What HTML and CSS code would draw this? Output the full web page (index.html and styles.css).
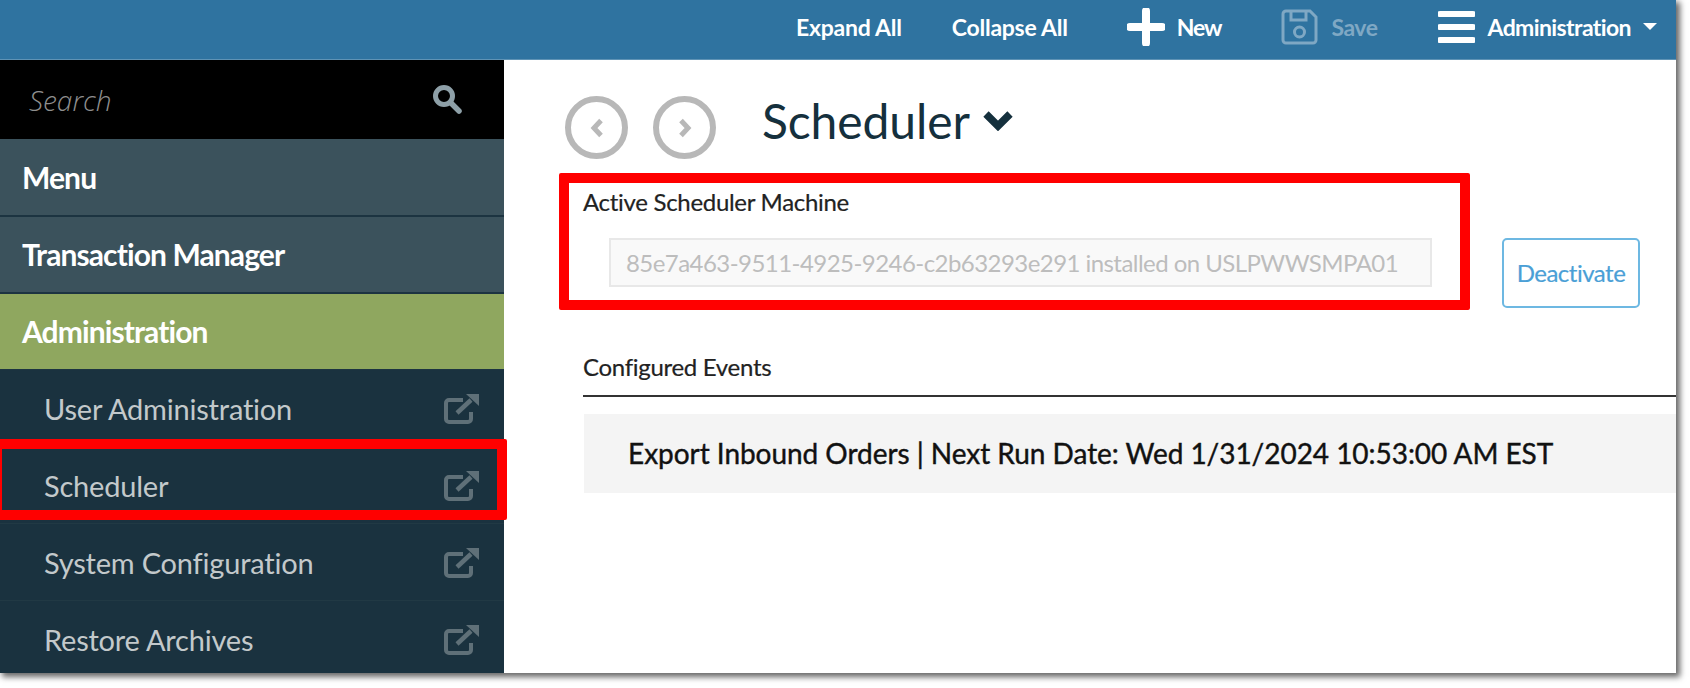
FILE: index.html
```html
<!DOCTYPE html>
<html lang="en">
<head>
<meta charset="utf-8">
<title>Scheduler</title>
<link rel="stylesheet" href="styles.css">
</head>
<body>
<div class="window">
  <header class="topbar">
    <div class="tb-group">
      <span class="tb-text tb-wide">Expand All</span>
      <span class="tb-text tb-wide">Collapse All</span>
    </div>
    <div class="tb-action">
      <svg class="ic-plus" viewBox="0 0 38 38"><path d="M19 3v32M3 19h32" fill="none" stroke="#fff" stroke-width="8" stroke-linecap="round"/></svg>
      <span class="tb-text tb-tight">New</span>
    </div>
    <div class="tb-action tb-disabled">
      <svg class="ic-save" viewBox="0 0 39 38"><path d="M3 6a3 3 0 0 1 3-3h24l6 6v23a3 3 0 0 1-3 3H6a3 3 0 0 1-3-3z" fill="none" stroke="currentColor" stroke-width="3"/><path d="M11 3v9h15V3" fill="none" stroke="currentColor" stroke-width="3"/><circle cx="19.500" cy="24" r="5" fill="none" stroke="currentColor" stroke-width="3"/></svg>
      <span class="tb-text">Save</span>
    </div>
    <div class="tb-action tb-admin">
      <svg class="ic-burger" viewBox="0 0 37 32"><path d="M2 3h33M2 16h33M2 29h33" fill="none" stroke="#fff" stroke-width="6" stroke-linecap="round"/></svg>
      <span class="tb-text tb-admin-text">Administration</span>
      <span class="caret"></span>
    </div>
  </header>
  <div class="body-row">
    <aside class="sidebar">
      <div class="search">
        <span class="search-text">Search</span>
        <svg class="ic-search" viewBox="0 0 30 30"><circle cx="12" cy="12" r="8.500" fill="none" stroke="#8ea0a8" stroke-width="5"/><path d="M18.500 18.500L27 27" stroke="#8ea0a8" stroke-width="5.500" stroke-linecap="round"/></svg>
      </div>
      <div class="menu-head">Menu</div>
      <div class="menu-head">Transaction Manager</div>
      <div class="menu-head menu-active">Administration</div>
      <div class="menu-item"><span>User Administration</span><svg class="ic-ext" viewBox="0 0 35 31"><use href="#ext"/></svg></div>
      <div class="menu-item"><span>Scheduler</span><svg class="ic-ext" viewBox="0 0 35 31"><use href="#ext"/></svg></div>
      <div class="menu-item"><span>System Configuration</span><svg class="ic-ext" viewBox="0 0 35 31"><use href="#ext"/></svg></div>
      <div class="menu-item"><span>Restore Archives</span><svg class="ic-ext" viewBox="0 0 35 31"><use href="#ext"/></svg></div>
    </aside>
    <main class="content">
      <div class="page-head">
        <span class="nav-circle"><svg viewBox="0 0 14 20"><path d="M11 2.500L4 10l7 7.500" fill="none" stroke="#b8b8b8" stroke-width="5"/></svg></span>
        <span class="nav-circle"><svg viewBox="0 0 14 20"><path d="M3 2.500l7 7.500-7 7.500" fill="none" stroke="#b8b8b8" stroke-width="5"/></svg></span>
        <h1 class="page-title">Scheduler</h1>
        <svg class="ic-chevron" viewBox="0 0 32 22"><path d="M4 5l12 12L28 5" fill="none" stroke="#15303d" stroke-width="7.500"/></svg>
      </div>
      <div class="field-label">Active Scheduler Machine</div>
      <div class="field-row">
        <div class="field-input">85e7a463-9511-4925-9246-c2b63293e291 installed on USLPWWSMPA01</div>
        <button class="btn-deactivate">Deactivate</button>
      </div>
      <div class="section-title">Configured Events</div>
      <div class="event-row">Export Inbound Orders | Next Run Date: Wed 1/31/2024 10:53:00 AM EST</div>
    </main>
  </div>
  <div class="annot annot-menu"></div>
  <div class="annot annot-field"></div>
</div>
<svg class="defs" width="0" height="0"><defs><g id="ext" fill="none" stroke="#5f7078" stroke-width="4"><path d="M27 19v7a3 3 0 0 1-3 3H5a3 3 0 0 1-3-3V10a3 3 0 0 1 3-3h14"/><path d="M13 20L27 7" stroke-width="4.500"/><path d="M22 1h13v12z" fill="#5f7078" stroke="none"/></g></defs></svg>
</body>
</html>
```
FILE: styles.css
```css
* { box-sizing: border-box; }
html, body { margin: 0; padding: 0; background: #fff; }
body { font-family: "Lato", "Noto Sans", sans-serif; overflow: hidden; height: 688px; }
.defs { position: absolute; }

.window {
  position: relative;
  width: 1676px;
  height: 673px;
  overflow: visible;
  box-shadow: 3px 3px 6px 1px rgba(0,0,0,.6);
  background: #fff;
  display: flex;
  flex-direction: column;
}

.topbar {
  height: 60px;
  flex: none;
  background: #2f73a0;
  display: flex;
  align-items: center;
  justify-content: flex-end;
  gap: 59px;
  padding: 0 19px 6px 0;
  border-bottom: 1px solid #5f93b5;
}
.tb-group { display: flex; gap: 50px; }
.tb-action { display: flex; align-items: center; gap: 12px; }
.tb-admin { margin-left: 1px; gap: 13px; }
.tb-text { color: #fff; font-size: 23px; font-weight: 700; letter-spacing: -.45px; white-space: nowrap; }
.tb-wide { letter-spacing: -.25px; }
.tb-tight { letter-spacing: -1.1px; }
.tb-admin-text { letter-spacing: -.6px; }
.tb-disabled, .tb-disabled .tb-text { color: #7fa8c4; }
.ic-plus { width: 38px; height: 38px; }
.ic-save { width: 39px; height: 38px; }
.ic-burger { width: 37px; height: 32px; }
.caret { width: 0; height: 0; margin-left: -1px; border: 7px solid transparent; border-top: 7px solid #fff; border-bottom: 0; }

.body-row { flex: 1; display: flex; min-height: 0; }

.sidebar {
  width: 504px;
  flex: none;
  background: #1a323f;
  overflow: hidden;
  height: 613px;
}
.search {
  height: 79px;
  background: #000;
  display: flex;
  align-items: center;
  justify-content: space-between;
  padding: 0 42px 0 29px;
}
.search-text { font-family: "Open Sans", sans-serif; font-style: italic; font-weight: 300; font-size: 28px; color: #8f8f8f; }
.ic-search { width: 30px; height: 30px; margin-top: -2px; }
.menu-head {
  height: 77.5px;
  background: #3b525c;
  border-bottom: 2px solid #1c3441;
  display: flex;
  align-items: center;
  padding-left: 22px;
  color: #fff;
  font-size: 30px;
  font-weight: 700;
  letter-spacing: -.9px;
}
.menu-head.menu-active { height: 76px; padding-bottom: 2px; background: #8fa75f; border-bottom: 1px solid #1c3441; }
.menu-item {
  height: 77px;
  flex: none;
  display: flex;
  align-items: center;
  justify-content: space-between;
  padding: 0 25px 0 44px;
  border-bottom: 1px solid #213944;
  color: #c3c9cb;
  font-size: 29px;
  letter-spacing: -.2px;
}
.ic-ext { width: 35px; height: 31px; }

.content { flex: 1; min-width: 0; padding: 36px 0 0 79px; color: #15303d; }
.page-head { display: flex; align-items: center; height: 63px; margin-left: -18px; }
.nav-circle {
  width: 63px; height: 63px;
  border: 6px solid #b8b8b8;
  border-radius: 50%;
  margin-right: 25px;
  display: flex; align-items: center; justify-content: center;
}
.nav-circle svg { width: 14px; height: 20px; }
.page-title { margin: -14px 0 0 21px; font-size: 48px; font-weight: 400; line-height: 52px; letter-spacing: -.1px; }
.ic-chevron { width: 32px; height: 22px; margin: -16px 0 0 12px; }
.field-label { margin-top: 28px; font-size: 24px; line-height: 30px; letter-spacing: -.3px; color: #222; -webkit-text-stroke: .2px #222; }
.field-row { display: flex; align-items: flex-start; margin-top: 21px; margin-left: 26px; }
.field-input {
  width: 823px; height: 49px;
  background: #f9f9f9;
  border: 2px solid #e8e8e8;
  padding-left: 15px;
  display: flex; align-items: center;
  font-size: 24px;
  color: #bdbdbd;
  white-space: nowrap;
  letter-spacing: -.55px;
}
.btn-deactivate {
  margin-left: 70px;
  width: 138px; height: 70px;
  background: #fff;
  border: 2px solid #6db8e2;
  border-radius: 5px;
  font-family: inherit;
  font-size: 24px;
  letter-spacing: -.5px;
  color: #4a9fd6;
  -webkit-text-stroke: .2px #4a9fd6;
  padding: 0 0 2px;
}
.section-title {
  margin-top: 44px;
  padding-bottom: 13px;
  border-bottom: 2px solid #333;
  font-size: 24px;
  line-height: 30px;
  letter-spacing: -.3px;
  color: #222;
  -webkit-text-stroke: .2px #222;
}
.event-row {
  margin: 17px 0 0 1px;
  height: 79px;
  background: #f4f4f4;
  display: flex; align-items: center;
  padding: 0 0 2px 44px;
  font-size: 28px;
  letter-spacing: -.04px;
  color: #111;
  -webkit-text-stroke: .4px #111;
  white-space: nowrap;
}

.annot { position: absolute; border: 10px solid #f00; border-radius: 2px; pointer-events: none; }
.annot-menu { left: -8px; top: 439px; width: 515px; height: 81px; }
.annot-field { left: 559px; top: 173px; width: 911px; height: 137px; }
```
